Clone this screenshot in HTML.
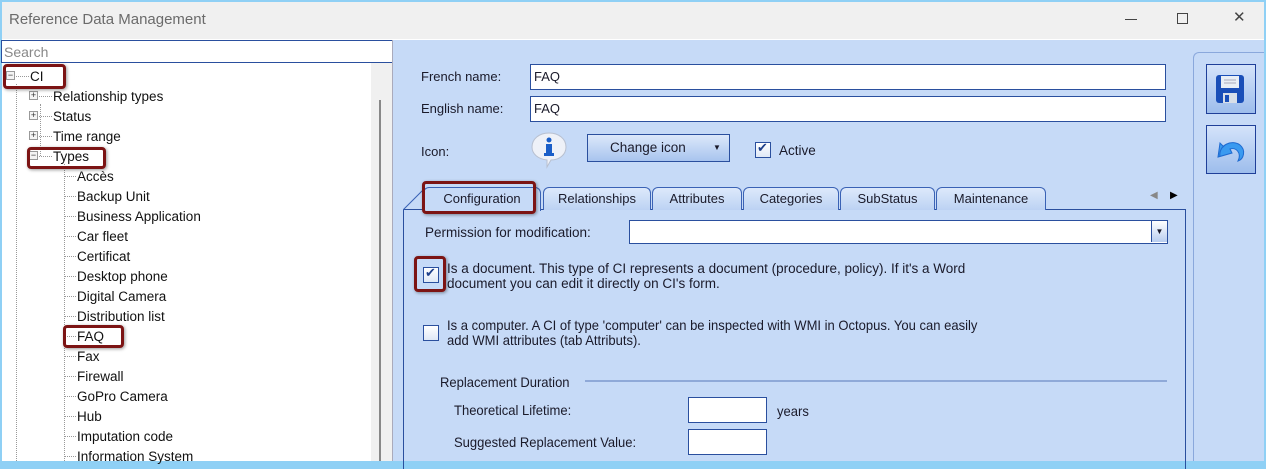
<!DOCTYPE html>
<html><head><meta charset="utf-8"><style>
*{margin:0;padding:0;box-sizing:border-box}
body{width:1266px;height:463px;overflow:hidden;background:#8fd0f5;font-family:"Liberation Sans",sans-serif;font-size:13px;color:#1a1a2a;position:relative}
.a{position:absolute;white-space:nowrap}
.red{position:absolute;border:3px solid #7c1414;border-radius:4px;box-shadow:1px 1px 3px rgba(0,0,0,.4)}
.inp{position:absolute;background:#fff;border:1.5px solid #2a4f9e}
.tab{position:absolute;top:187px;height:23px;border:1px solid #3a62b5;border-bottom:none;border-radius:6px 6px 0 0;background:linear-gradient(#dde9fb,#bcd2f3);text-align:center;line-height:21px;font-size:13px}
.cb{position:absolute;width:16px;height:16px;border:1.5px solid #2a4f9e;background:linear-gradient(#fff,#dfe8f6)}
.n{display:inline-block;transform:scaleX(.93);transform-origin:left}
</style></head><body>
<div class="a" style="left:2px;top:2px;width:1262px;height:459px;background:#fff"></div>
<div class="a" style="left:2px;top:2px;width:1262px;height:37px;background:#f0f0f0"></div>
<div class="a" style="left:9px;top:11px;font-size:15px;color:#6b6b6b">Reference Data Management</div>
<div class="a" style="left:1125px;top:19px;width:12px;height:1px;background:#444"></div>
<div class="a" style="left:1177px;top:13px;width:11px;height:11px;border:1px solid #444"></div>
<div class="a" style="left:1233px;top:8px;font-size:15px;color:#444">✕</div>
<!-- left -->
<div class="a" style="left:1px;top:40px;width:392px;height:23px;border:1.5px solid #2a4f9e;background:#fff;padding:3px 2px;font-size:14px;color:#888">Search</div>
<div class="a" style="left:371px;top:63px;width:21px;height:398px;background:#f0f0f0"></div>
<div class="a" style="left:379px;top:100px;width:2px;height:361px;background:#888"></div>
<div class="a" style="left:392px;top:40px;width:1px;height:421px;background:#aab"></div>
<div class="a" style="left:16px;top:84px;width:0;height:377px;border-left:1px dotted #999"></div>
<div class="a" style="left:40px;top:104px;width:0;height:52px;border-left:1px dotted #999"></div>
<div class="a" style="left:64px;top:164px;width:0;height:297px;border-left:1px dotted #999"></div>
<div id="tree"></div>
<div class="red" style="left:3px;top:64px;width:63px;height:25px"></div>
<div class="red" style="left:27px;top:147px;width:79px;height:22px"></div>
<div class="red" style="left:63px;top:325px;width:61px;height:23px"></div>
<!-- right -->
<div class="a" style="left:393px;top:40px;width:871px;height:421px;background:#c6daf7"></div>
<div class="a" style="left:1193px;top:52px;width:71px;height:409px;border:1px solid #8aa8dc;border-right:none;border-bottom:none;border-radius:6px 0 0 0"></div>
<div class="a" style="left:1206px;top:64px;width:50px;height:50px;border:1.5px solid #1f3f99;background:linear-gradient(#d4e3fa,#9dbdec)"></div>
<svg class="a" style="left:1215px;top:74px" width="32" height="30"><rect x="1" y="1" width="28" height="28" rx="3" fill="#1a4fb8"/><rect x="6" y="2" width="18" height="12" fill="#e8eef5"/><line x1="9" y1="6" x2="21" y2="6" stroke="#aab"/><line x1="9" y1="9" x2="21" y2="9" stroke="#aab"/><rect x="8" y="19" width="14" height="10" fill="#d8dfe8"/><rect x="10" y="21" width="4" height="7" fill="#1a4fb8"/></svg>
<div class="a" style="left:1206px;top:125px;width:50px;height:49px;border:1.5px solid #1f3f99;background:linear-gradient(#d4e3fa,#9dbdec)"></div>
<svg class="a" style="left:1214px;top:135px" width="34" height="28"><path d="M6 22 C4 10 18 4 26 10 C32 15 30 24 24 26 C28 18 22 12 16 14 L18 18 L4 22 L6 8 L10 12" fill="#3a9af0" stroke="#1e6ad0" stroke-width="1"/></svg>

<div class="a" style="left:421px;top:69px">French name:</div>
<div class="inp" style="left:530px;top:64px;width:636px;height:26px;padding:4px 3px">FAQ</div>
<div class="a" style="left:421px;top:101px">English name:</div>
<div class="inp" style="left:530px;top:96px;width:636px;height:26px;padding:4px 3px">FAQ</div>
<div class="a" style="left:421px;top:144px">Icon:</div>
<svg class="a" style="left:529px;top:129px" width="40" height="40"><path d="M20 4 C30 4 37 10 37 18 C37 26 30 31 22 31 L18 38 L18 31 C9 30 3 25 3 18 C3 10 10 4 20 4Z" fill="#eef1f8" stroke="#b8c0d0"/><circle cx="20" cy="11" r="2.5" fill="#1a5ec8"/><rect x="17" y="15" width="6" height="11" fill="#1a5ec8"/><rect x="15" y="24" width="10" height="3" fill="#1a5ec8"/></svg>
<div class="a" style="left:587px;top:134px;width:143px;height:28px;border:1.5px solid #2a4f9e;background:linear-gradient(#dce8fa,#a8c4ee);font-size:13.5px;line-height:25px;padding-left:22px">Change icon<span style="position:absolute;left:125px;font-size:8px">▼</span></div>
<div class="cb" style="left:755px;top:142px"><span style="position:absolute;left:1px;top:-3px;font-size:13px;color:#1e3f8a">✔</span></div>
<div class="a" style="left:779px;top:143px;font-size:13.5px">Active</div>

<div class="a" style="left:403px;top:209px;width:783px;height:260px;border:1.5px solid #2a4f9e;border-bottom:none"></div>
<svg class="a" style="left:403px;top:187px" width="24" height="24"><path d="M0 23 L22 1" stroke="#3a62b5"/></svg>
<div class="tab" style="left:423px;width:118px;height:24px;background:#c6daf7">Configuration</div>
<div class="tab" style="left:543px;width:108px">Relationships</div>
<div class="tab" style="left:652px;width:90px">Attributes</div>
<div class="tab" style="left:743px;width:96px">Categories</div>
<div class="tab" style="left:840px;width:95px">SubStatus</div>
<div class="tab" style="left:936px;width:110px">Maintenance</div>
<div class="a" style="left:1150px;top:190px;font-size:10px;color:#888">◀</div>
<div class="a" style="left:1170px;top:190px;font-size:10px;color:#000">▶</div>
<div class="red" style="left:422px;top:181px;width:114px;height:33px"></div>

<div class="a" style="left:425px;top:225px;font-size:13.5px">Permission for modification:</div>
<div class="inp" style="left:629px;top:220px;width:539px;height:24px"><div style="position:absolute;right:0;top:0;width:16px;height:21px;border-left:1px solid #2a4f9e;background:linear-gradient(#fff,#b8cdf0);font-size:8px;text-align:center;line-height:21px">▼</div></div>

<div class="cb" style="left:423px;top:267px"><span style="position:absolute;left:1px;top:-3px;font-size:13px;color:#1e3f8a">✔</span></div>
<div class="red" style="left:414px;top:256px;width:32px;height:36px"></div>
<div class="a" style="left:447px;top:261px;line-height:15px;font-size:13.5px">Is a document. This type of CI represents a document (procedure, policy). If it's a Word<br>document you can edit it directly on CI's form.</div>

<div class="cb" style="left:423px;top:325px"></div>
<div class="a" style="left:447px;top:318px;line-height:15px;font-size:14px"><span class="n">Is a computer. A CI of type 'computer' can be inspected with WMI in Octopus. You can easily<br>add WMI attributes (tab Attributs).</span></div>

<div class="a" style="left:440px;top:374px;font-size:14px"><span class="n">Replacement Duration</span></div>
<div class="a" style="left:585px;top:380px;width:582px;height:2px;background:#8fa9d8"></div>
<div class="a" style="left:454px;top:402px;font-size:14px"><span class="n">Theoretical Lifetime:</span></div>
<div class="inp" style="left:688px;top:397px;width:79px;height:26px"></div>
<div class="a" style="left:777px;top:403px;font-size:14px"><span class="n">years</span></div>
<div class="a" style="left:454px;top:434px;font-size:14px"><span class="n">Suggested Replacement Value:</span></div>
<div class="inp" style="left:688px;top:429px;width:79px;height:26px"></div>

<script>
var items=[["CI",30,1,"-"],["Relationship types",53,2,"+"],["Status",53,2,"+"],["Time range",53,2,"+"],["Types",53,2,"-"]];
["Accès","Backup Unit","Business Application","Car fleet","Certificat","Desktop phone","Digital Camera","Distribution list","FAQ","Fax","Firewall","GoPro Camera","Hub","Imputation code","Information System"].forEach(function(t){items.push([t,77,3,""])});
var h="";items.forEach(function(it,i){var y=68+i*20;var bx=it[1]-22;
if(it[3]){h+='<div class="a" style="left:'+(bx-2)+'px;top:'+(y+3)+'px;width:9px;height:9px;border:1px solid #999;background:#f4f4f4;font-size:9px;line-height:7px;text-align:center;color:#333">'+(it[3]=="+"?"+":"−")+'</div>';h+='<div class="a" style="left:'+(bx+8)+'px;top:'+(y+8)+'px;width:'+(it[1]-bx-9)+'px;border-top:1px dotted #999"></div>';}
else h+='<div class="a" style="left:'+(it[1]-12)+'px;top:'+(y+8)+'px;width:11px;border-top:1px dotted #999"></div>';
h+='<div class="a" style="left:'+it[1]+'px;top:'+(y+1)+'px;font-size:13.5px;color:#111">'+it[0]+'</div>';});
document.getElementById("tree").innerHTML=h;
</script>
</body></html>
